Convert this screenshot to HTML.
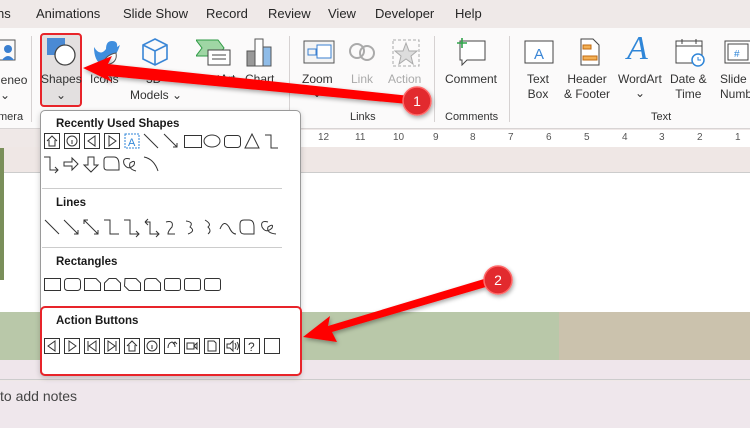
<!DOCTYPE html>
<html><head><meta charset="utf-8"><style>
*{margin:0;padding:0;box-sizing:border-box}
body{width:750px;height:428px;overflow:hidden;position:relative;background:#efe8e7;font-family:"Liberation Sans",sans-serif;color:#222}
.a{position:absolute}
.tab{position:absolute;top:6px;font-size:13px;color:#262626}
.lbl{position:absolute;font-size:12px;color:#333;text-align:center;line-height:15px}
.gl{position:absolute;top:111px;font-size:11px;color:#333}
.sep{position:absolute;top:36px;width:1px;height:86px;background:#d6d2d2}
.h{position:absolute;left:56px;font-size:11.5px;font-weight:bold;color:#1a1a1a}
</style></head><body>
<!-- tabs -->
<div class="a" style="left:0;top:0;width:750px;height:28px;background:#efe9e8"></div>
<div class="tab" style="left:-3px">ns</div>
<div class="tab" style="left:36px">Animations</div>
<div class="tab" style="left:123px">Slide Show</div>
<div class="tab" style="left:206px">Record</div>
<div class="tab" style="left:268px">Review</div>
<div class="tab" style="left:328px">View</div>
<div class="tab" style="left:375px">Developer</div>
<div class="tab" style="left:455px">Help</div>
<!-- ribbon -->
<div class="a" style="left:0;top:28px;width:750px;height:101px;background:#fbfafa;border-bottom:1px solid #d8d4d4"></div>
<div class="sep" style="left:31px"></div><div class="sep" style="left:289px"></div><div class="sep" style="left:434px"></div><div class="sep" style="left:509px"></div>
<div class="lbl" style="left:-2px;top:73px">ieneo</div><div class="lbl" style="left:0;top:88px">⌄</div>
<div class="gl" style="left:-2px">mera</div>
<svg class="a" style="left:0;top:38px" width="20" height="28"><rect x="-5" y="2" width="20" height="20" fill="none" stroke="#555"/><circle cx="8" cy="11" r="4" fill="#3a7fd0"/><path d="M2 22 Q8 14 14 22Z" fill="#3a7fd0"/></svg>
<!-- shapes -->
<div class="a" style="left:40px;top:33px;width:42px;height:74px;background:#e3e0e0;border:2px solid #e8242a;border-radius:4px"></div>
<svg class="a" style="left:46px;top:37px" width="32" height="30"><rect x="1" y="1" width="18" height="17" fill="#4a8ad4"/><circle cx="19" cy="18" r="10" fill="#fff" stroke="#444" stroke-width="1.3"/></svg>
<div class="lbl" style="left:41px;top:72px;width:40px">Shapes</div><div class="lbl" style="left:41px;top:88px;width:40px">⌄</div>
<svg class="a" style="left:90px;top:37px" width="32" height="32"><path d="M4 10 Q10 20 16 12 Q16 4 22 4 Q28 4 27 10 L30 8 Q24 26 12 28 Q4 24 4 10Z" fill="#3f8ede"/><path d="M12 30 Q14 18 26 16 Q28 26 16 28" fill="#fff" stroke="#555"/></svg>
<div class="lbl" style="left:90px;top:72px">Icons</div>
<svg class="a" style="left:140px;top:37px" width="30" height="30"><path d="M15 2 L27 8 L27 22 L15 28 L3 22 L3 8Z M3 8 L15 14 L27 8 M15 14 L15 28" fill="none" stroke="#3a86d6" stroke-width="1.6"/></svg>
<div class="lbl" style="left:146px;top:72px">3D</div>
<div class="lbl" style="left:130px;top:88px">Models ⌄</div>
<svg class="a" style="left:196px;top:38px" width="36" height="30"><path d="M0 2 L22 2 L28 10 L22 18 L0 18 L6 10Z" fill="#9fd6a4" stroke="#2f9a46"/><rect x="12" y="12" width="22" height="15" fill="#fff" stroke="#444"/><path d="M16 17h14M16 21h14" stroke="#444"/></svg>
<div class="lbl" style="left:188px;top:72px">SmartArt</div>
<svg class="a" style="left:246px;top:37px" width="28" height="30"><rect x="1" y="14" width="8" height="15" fill="#999" stroke="#555"/><rect x="9" y="2" width="8" height="27" fill="#fff" stroke="#555"/><rect x="17" y="10" width="8" height="19" fill="#8fbce8" stroke="#555"/></svg>
<div class="lbl" style="left:245px;top:72px">Chart</div>
<div class="gl" style="left:130px">Illustrations</div>
<svg class="a" style="left:303px;top:40px" width="32" height="24"><rect x="1" y="1" width="30" height="22" fill="#f4f4f4" stroke="#555"/><rect x="5" y="9" width="8" height="6" fill="none" stroke="#3a7fd0"/><rect x="14" y="5" width="14" height="13" fill="#fff" stroke="#3a7fd0"/></svg>
<div class="lbl" style="left:302px;top:72px">Zoom</div><div class="lbl" style="left:312px;top:86px">⌄</div>
<svg class="a" style="left:348px;top:40px" width="28" height="24"><circle cx="9" cy="11" r="7" fill="none" stroke="#aaa" stroke-width="2"/><circle cx="19" cy="13" r="7" fill="none" stroke="#aaa" stroke-width="2"/></svg>
<div class="lbl" style="left:351px;top:72px;color:#aaa">Link</div>
<svg class="a" style="left:391px;top:38px" width="30" height="30"><rect x="2" y="2" width="26" height="26" fill="none" stroke="#aaa" stroke-dasharray="3 2"/><path d="M15 5 L18 13 L26 13 L20 18 L22 26 L15 21 L8 26 L10 18 L4 13 L12 13Z" fill="#ddd" stroke="#aaa"/></svg>
<div class="lbl" style="left:388px;top:72px;color:#aaa">Action</div>
<div class="gl" style="left:350px">Links</div>
<svg class="a" style="left:455px;top:36px" width="34" height="30"><path d="M5 5 L30 5 L30 24 L12 24 L7 29 L7 24 L5 24Z" fill="#fff" stroke="#444"/><path d="M2 7h10M7 2v10" stroke="#2fa34a" stroke-width="1.6"/></svg>
<div class="lbl" style="left:445px;top:72px">Comment</div>
<div class="gl" style="left:445px">Comments</div>
<svg class="a" style="left:522px;top:38px" width="34" height="28"><rect x="3" y="3" width="28" height="22" fill="#fff" stroke="#444"/><text x="12" y="21" font-size="15" fill="#3a86d6" font-family="Liberation Sans">A</text></svg>
<div class="lbl" style="left:527px;top:72px">Text<br>Box</div>
<svg class="a" style="left:576px;top:37px" width="28" height="30"><path d="M5 2 L17 2 L23 8 L23 28 L5 28Z" fill="#fff" stroke="#444"/><rect x="7" y="8" width="8" height="4" fill="#f3b055" stroke="#c06a10"/><rect x="7" y="19" width="14" height="4" fill="#f3b055" stroke="#c06a10"/></svg>
<div class="lbl" style="left:564px;top:72px">Header<br>&amp; Footer</div>
<div class="a" style="left:627px;top:30px;font-size:34px;font-style:italic;color:#2f86d8;font-family:'Liberation Serif',serif">A</div>
<div class="lbl" style="left:618px;top:72px">WordArt</div><div class="lbl" style="left:635px;top:86px">⌄</div>
<svg class="a" style="left:673px;top:37px" width="32" height="30"><rect x="3" y="4" width="26" height="22" fill="#fff" stroke="#444"/><path d="M3 9h26M9 2v5M23 2v5" stroke="#444"/><circle cx="25" cy="23" r="6" fill="#fff" stroke="#2f86d8" stroke-width="1.5"/><path d="M25 20v3h3" stroke="#2f86d8" fill="none"/></svg>
<div class="lbl" style="left:670px;top:72px">Date &amp;<br>Time</div>
<svg class="a" style="left:722px;top:38px" width="30" height="28"><rect x="3" y="3" width="26" height="22" fill="#fff" stroke="#444"/><rect x="6" y="6" width="20" height="16" fill="none" stroke="#444"/><text x="12" y="19" font-size="10" fill="#2f86d8">#</text></svg>
<div class="lbl" style="left:720px;top:72px;text-align:left">Slide<br>Numbe</div>
<div class="gl" style="left:651px">Text</div>
<!-- ruler -->
<div class="a" style="left:300px;top:130px;width:450px;height:17px;background:#fff;font-size:10px;color:#555;white-space:nowrap;letter-spacing:0"><span class="a" style="left:18px;top:2px">12</span><span class="a" style="left:55px;top:2px">11</span><span class="a" style="left:93px;top:2px">10</span><span class="a" style="left:133px;top:2px">9</span><span class="a" style="left:170px;top:2px">8</span><span class="a" style="left:208px;top:2px">7</span><span class="a" style="left:246px;top:2px">6</span><span class="a" style="left:284px;top:2px">5</span><span class="a" style="left:322px;top:2px">4</span><span class="a" style="left:359px;top:2px">3</span><span class="a" style="left:397px;top:2px">2</span><span class="a" style="left:435px;top:2px">1</span></div>
<div class="a" style="left:0;top:147px;width:750px;height:26px;background:#efe7e5;border-bottom:1px solid #ccc"></div>
<div class="a" style="left:0;top:173px;width:750px;height:139px;background:#fff"></div>
<div class="a" style="left:0;top:312px;width:559px;height:48px;background:#b9c8a9"></div>
<div class="a" style="left:559px;top:312px;width:191px;height:48px;background:#cbc2ad"></div>
<div class="a" style="left:0;top:360px;width:750px;height:20px;background:#efe6eb;border-bottom:1px solid #ccc"></div>
<div class="a" style="left:0;top:381px;width:750px;height:47px;background:#efe7ec"></div>
<div class="a" style="left:0;top:388px;font-size:14px;color:#444">to add notes</div>
<div class="a" style="left:0;top:148px;width:4px;height:132px;background:#7a8f5a"></div>
<!-- dropdown -->
<div class="a" style="left:40px;top:110px;width:261px;height:266px;background:#fff;border:1px solid #9a9a9a;border-radius:5px;box-shadow:0 2px 6px rgba(0,0,0,.2)"></div>
<div class="h" style="top:118px">Recently Used Shapes</div>
<div class="a" style="left:42px;top:188px;width:240px;height:1px;background:#ccc"></div>
<div class="h" style="top:197px">Lines</div>
<div class="a" style="left:42px;top:247px;width:240px;height:1px;background:#ccc"></div>
<div class="h" style="top:256px">Rectangles</div>
<div class="h" style="top:315px">Action Buttons</div>
<div class="a" style="left:40px;top:306px;width:262px;height:70px;border:2px solid #e8242a;border-radius:5px"></div>
<svg class="a" style="left:40px;top:130px" width="262" height="230" fill="none" stroke="#333" stroke-width="1">
<g transform="translate(4,3)">
<rect x="0.5" y="0.5" width="15" height="15"/><path d="M3 8 L8 3 L13 8 M5 7 V13 H11 V7"/>
<rect x="20.5" y="0.5" width="15" height="15"/><circle cx="28" cy="8" r="5"/><path d="M28 7v4"/>
<rect x="40.5" y="0.5" width="15" height="15"/><path d="M51 3 L44 8 L51 13Z"/>
<rect x="60.5" y="0.5" width="15" height="15"/><path d="M65 3 L72 8 L65 13Z"/>
<rect x="81" y="1" width="14" height="14" stroke="#2f86d8" stroke-dasharray="2 1"/><text x="84" y="13" font-size="11" fill="#2f86d8" stroke="none">A</text>
<path d="M100 1 L114 15 M120 1 L133 14 M133 10 V14 H129"/>
<rect x="140.5" y="2.5" width="17" height="12"/><ellipse cx="168" cy="8" rx="8" ry="6"/><rect x="180.5" y="2.5" width="16" height="12" rx="3"/>
<path d="M201 15 L208 1 L215 15Z M221 2 H227 V15 H234"/>
<path d="M0 24 H6 V37 H14 M11 34 L14 37 L11 40 M20 29 H28 V25 L34 31 L28 37 V33 H20Z M44 24 V32 H40 L47 39 L54 32 H50 V24Z M60 27 Q60 24 63 24 H70 Q75 24 75 32 L75 37 H63 Q60 37 60 34Z M86 26 Q78 24 80 31 Q84 38 90 32 Q92 26 86 30 Q84 36 92 38 M100 24 Q110 26 114 38"/>
</g>
<g transform="translate(4,89)">
<path d="M1 1 L15 15 M20 1 L34 15 M34 11 V15 H30 M40 1 L54 15 M40 5 V1 H44 M54 11 V15 H50 M60 1 H66 V15 H75 M80 1 H86 V15 H95 M92 12 L95 15 L92 18 M101 3 L104 0 M101 3 L104 6 M101 3 H106 V15 H115 M112 12 L115 15 L112 18 M122 3 Q130 1 128 8 Q124 12 124 15 H131 M142 2 Q150 3 146 8 Q152 12 144 15 M161 1 Q168 5 164 8 Q168 12 164 15 M176 10 Q180 0 185 8 Q188 15 192 15 M196 5 Q196 1 200 1 H205 Q210 1 210 8 V15 H200 Q196 15 196 10Z M224 3 Q216 1 218 8 Q222 15 228 9 Q230 4 224 8 Q222 14 232 15"/>
</g>
<g transform="translate(4,148)">
<rect x="0.5" y="0.5" width="16" height="12"/><rect x="20.5" y="0.5" width="16" height="12" rx="3"/><path d="M40.5 0.5 H52 L56.5 5 V12.5 H40.5Z M60.5 12.5 V5 L65 0.5 H72 L76.5 5 V12.5Z M81 0.5 H92 L96.5 5 V12.5 H85 L80.5 8 Z M100.5 12.5 V4 Q100.5 0.5 104 0.5 H112 L116.5 5 V12.5Z"/><rect x="120.5" y="0.5" width="16" height="12" rx="2"/><rect x="140.5" y="0.5" width="16" height="12" rx="2"/><rect x="160.5" y="0.5" width="16" height="12" rx="2"/>
</g>
<g transform="translate(4,208)">
<rect x="0.5" y="0.5" width="15" height="15"/><path d="M11 3 L4 8 L11 13Z"/>
<rect x="20.5" y="0.5" width="15" height="15"/><path d="M25 3 L32 8 L25 13Z"/>
<rect x="40.5" y="0.5" width="15" height="15"/><path d="M44 3 V13 M52 3 L45 8 L52 13Z"/>
<rect x="60.5" y="0.5" width="15" height="15"/><path d="M72 3 V13 M64 3 L71 8 L64 13Z"/>
<rect x="80.5" y="0.5" width="15" height="15"/><path d="M83 8 L88 3 L93 8 M85 7 V13 H91 V7"/>
<rect x="100.5" y="0.5" width="15" height="15"/><circle cx="108" cy="8" r="5"/><path d="M108 7v4"/>
<rect x="120.5" y="0.5" width="15" height="15"/><path d="M124 10 Q124 5 128 4 Q131 5 131 9 M129 6 L131 4 L133 6"/>
<rect x="140.5" y="0.5" width="15" height="15"/><rect x="143" y="5" width="7" height="6"/><path d="M150 8 L153 5 V11Z"/>
<rect x="160.5" y="0.5" width="15" height="15"/><path d="M164 3 H170 L172 5 V13 H164Z"/>
<rect x="180.5" y="0.5" width="15" height="15"/><path d="M183 6 H186 L189 3 V13 L186 10 H183Z M191 5 Q193 8 191 11 M193 4 Q196 8 193 12"/>
<rect x="200.5" y="0.5" width="15" height="15"/><text x="204" y="13" font-size="12" fill="#333" stroke="none">?</text>
<rect x="220.5" y="0.5" width="15" height="15"/>
</g>
</svg>
<!-- arrows -->
<svg class="a" style="left:0;top:0" width="750" height="428">
<defs><filter id="s"><feDropShadow dx="1" dy="2" stdDeviation="2" flood-opacity=".35"/></filter></defs>
<g filter="url(#s)" fill="#f00">
<path d="M83 68 L112 56 L108 64 L410 96 L408 104 L108 76 L112 82Z"/>
<path d="M303 337 L330 316 L328 326 L494 276 L496 284 L332 332 L337 342Z"/>
<circle cx="417" cy="101" r="14" fill="#e22a2e" stroke="#ff6b6b" stroke-width="1.5"/>
<circle cx="498" cy="280" r="14" fill="#e22a2e" stroke="#ff6b6b" stroke-width="1.5"/>
</g>
<text x="417" y="106" font-size="14" fill="#fff" text-anchor="middle" font-family="Liberation Sans">1</text>
<text x="498" y="285" font-size="14" fill="#fff" text-anchor="middle" font-family="Liberation Sans">2</text>
</svg>
</body></html>
